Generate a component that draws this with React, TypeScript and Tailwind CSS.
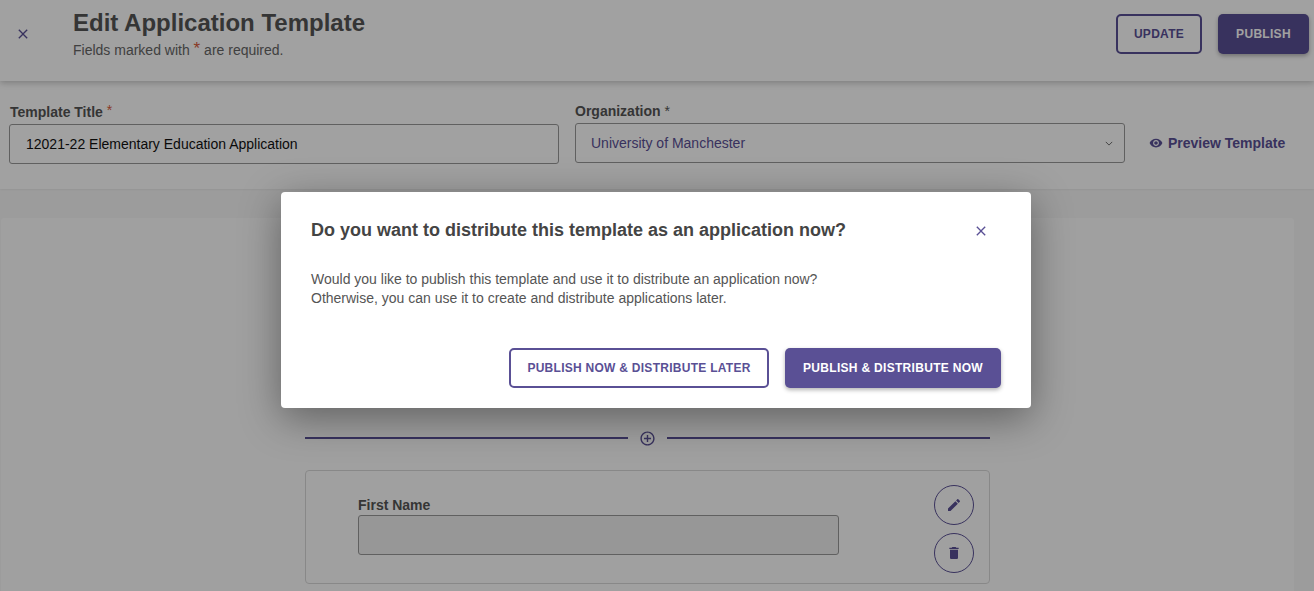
const FONT = "[font-family:'Liberation_Sans',Arial,sans-serif]";

function Icon({ d, className }: { d: string; className: string }) {
  return (
    <svg viewBox="0 0 24 24" fill="currentColor" className={className}>
      <path d={d} />
    </svg>
  );
}

const CLOSE = "M19 6.41L17.59 5 12 10.59 6.41 5 5 6.41 10.59 12 5 17.59 6.41 19 12 13.41 17.59 19 19 17.59 13.41 12z";
const EYE = "M12 4.5C7 4.5 2.73 7.61 1 12c1.73 4.39 6 7.5 11 7.5s9.27-3.11 11-7.5c-1.73-4.39-6-7.5-11-7.5zM12 17c-2.76 0-5-2.24-5-5s2.24-5 5-5 5 2.24 5 5-2.24 5-5 5zm0-8c-1.66 0-3 1.34-3 3s1.34 3 3 3 3-1.34 3-3-1.34-3-3-3z";
const EDIT = "M3 17.25V21h3.75L17.81 9.94l-3.75-3.75L3 17.25zM20.71 7.04c.39-.39.39-1.02 0-1.41l-2.34-2.34c-.39-.39-1.02-.39-1.41 0l-1.83 1.83 3.75 3.75 1.83-1.83z";
const TRASH = "M6 19c0 1.1.9 2 2 2h8c1.1 0 2-.9 2-2V7H6v12zM19 4h-3.5l-1-1h-5l-1 1H5v2h14V4z";
const ADD = "M13 7h-2v4H7v2h4v4h2v-4h4v-2h-4V7zm-1-5C6.48 2 2 6.48 2 12s4.48 10 10 10 10-4.48 10-10S17.52 2 12 2zm0 18c-4.41 0-8-3.59-8-8s3.59-8 8-8 8 3.59 8 8-3.59 8-8 8z";

export default function App() {
  return (
    <div className={`relative h-[591px] w-full overflow-hidden bg-[#f8f8f8] ${FONT}`}>
      <header className="relative z-10 flex h-[81px] items-start bg-white shadow-[0_2px_6px_rgba(0,0,0,0.22)]">
        <div className="flex w-[73px] shrink-0 pl-[15px] pt-[26px] text-[#5a5095]">
          <Icon d={CLOSE} className="h-[16px] w-[16px]" />
        </div>
        <div className="flex-1">
          <h1 className="mt-[9px] text-[24px] font-bold leading-[28px] text-[#555]">
            Edit Application Template
          </h1>
          <p className="mt-[3px] text-[14px] leading-[20px] text-[#666]">
            Fields marked with <span className="align-[1px] text-[17px] leading-[14px] text-[#d95c3c]">*</span> are required.
          </p>
        </div>
        <div className="flex gap-[16px] pr-[5px] pt-[14px]">
          <button className="h-[40px] w-[86px] rounded-[5px] border-2 border-[#5a5095] bg-white text-[12px] font-bold tracking-[0.3px] text-[#5a5095]">
            UPDATE
          </button>
          <button className="h-[40px] w-[91px] rounded-[5px] bg-[#5a5095] text-[12px] font-bold tracking-[0.3px] text-white shadow-[0_2px_4px_rgba(0,0,0,0.3)]">
            PUBLISH
          </button>
        </div>
      </header>

      <section className="flex h-[108px] items-start bg-white pl-[9px] shadow-[0_1px_2px_rgba(0,0,0,0.06)]">
        <div className="w-[550px] shrink-0 pt-[18px]">
          <label className="block h-[25px] pl-[1px] text-[14px] font-bold leading-[22px] text-[#555]">
            Template Title <span className="align-[2px] font-normal text-[#d95c3c]">*</span>
          </label>
          <div className="flex h-[40px] items-center rounded-[3px] border border-[#999] bg-white pl-[16px] text-[14px] text-[#111]">
            12021-22 Elementary Education Application
          </div>
        </div>
        <div className="ml-[16px] w-[550px] shrink-0 pt-[19px]">
          <label className="block h-[23px] text-[14px] font-bold leading-[22px] text-[#555]">
            Organization <span className="font-normal">*</span>
          </label>
          <div className="flex h-[40px] items-center justify-between rounded-[3px] border border-[#999] bg-white pl-[15px] pr-[11px] text-[14px] text-[#5a5095]">
            University of Manchester
            <svg viewBox="0 0 10 6" fill="none" stroke="currentColor" strokeWidth="1.2" className="h-[5px] w-[8px] text-[#666]">
              <path d="M1 1l4 4 4-4" />
            </svg>
          </div>
        </div>
        <div className="ml-[24px] flex items-center gap-[5px] pt-[52px] text-[14px] font-bold leading-[20px] text-[#5a5095]">
          <Icon d={EYE} className="h-[14px] w-[14px]" />
          Preview Template
        </div>
      </section>

      <main className="ml-[1px] mt-[29px] flex h-[400px] w-[1293px] flex-col items-center rounded-t-[4px] bg-[#fefefe] pt-[210px]">
        <div className="flex h-[20px] w-[685px] shrink-0 items-center text-[#5a5095]">
          <div className="h-[2px] w-[323px] bg-[#5a5095]" />
          <Icon d={ADD} className="mx-[11px] h-[17px] w-[17px]" />
          <div className="h-[2px] flex-1 bg-[#5a5095]" />
        </div>
        <div className="mt-[22px] flex h-[114px] w-[685px] shrink-0 rounded-[4px] border border-[#d8d8d8] pl-[52px] pr-[15px] pt-[14px]">
          <div className="w-[481px] shrink-0 pt-[10px]">
            <div className="h-[20px] text-[14px] font-bold leading-[20px] text-[#555]">First Name</div>
            <div className="h-[40px] rounded-[3px] border border-[#999] bg-[#efefef]" />
          </div>
          <div className="ml-auto flex flex-col gap-[8px]">
            <button className="flex h-[40px] w-[40px] items-center justify-center rounded-full border border-[#5a5095] text-[#5a5095]">
              <Icon d={EDIT} className="h-[16px] w-[16px]" />
            </button>
            <button className="flex h-[40px] w-[40px] items-center justify-center rounded-full border border-[#5a5095] text-[#5a5095]">
              <Icon d={TRASH} className="h-[16px] w-[16px]" />
            </button>
          </div>
        </div>
      </main>

      <div className="absolute inset-0 z-20 bg-black/[0.37]" />

      <div className="absolute left-[281px] top-[192px] z-30 flex h-[216px] w-[750px] flex-col rounded-[4px] bg-white px-[30px] pt-[26px] shadow-[0_10px_40px_rgba(0,0,0,0.4)]">
        <div className="flex items-start justify-between">
          <h2 className="text-[18px] font-bold leading-[24px] text-[#444]">
            Do you want to distribute this template as an application now?
          </h2>
          <div className="mr-[12px] mt-[5px] text-[#5a5095]">
            <Icon d={CLOSE} className="h-[16px] w-[16px]" />
          </div>
        </div>
        <p className="mt-[28px] text-[14px] leading-[19px] text-[#555]">
          Would you like to publish this template and use it to distribute an application now?
          <br />
          Otherwise, you can use it to create and distribute applications later.
        </p>
        <div className="mt-[40px] flex justify-end gap-[16px]">
          <button className="h-[40px] w-[260px] rounded-[5px] border-2 border-[#5a5095] bg-white text-[12px] font-bold tracking-[0.27px] text-[#5a5095]">
            PUBLISH NOW &amp; DISTRIBUTE LATER
          </button>
          <button className="h-[40px] w-[216px] rounded-[5px] bg-[#5a5095] text-[12px] font-bold tracking-[0.3px] text-white shadow-[0_2px_4px_rgba(0,0,0,0.3)]">
            PUBLISH &amp; DISTRIBUTE NOW
          </button>
        </div>
      </div>
    </div>
  );
}
